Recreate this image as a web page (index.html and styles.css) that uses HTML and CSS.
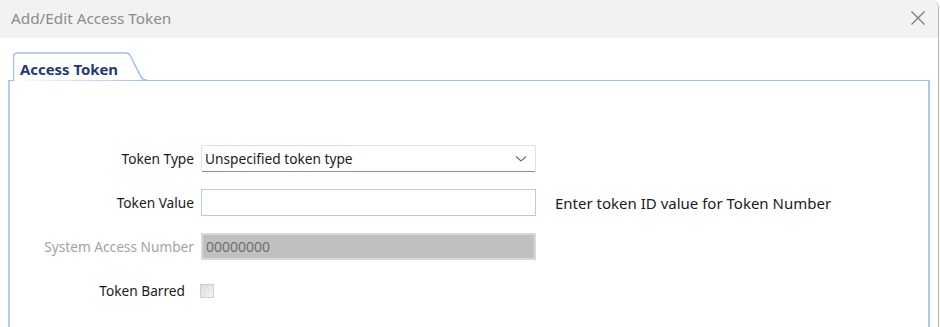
FILE: index.html
```html
<!DOCTYPE html>
<html lang="en">
<head>
<meta charset="UTF-8" />
<title>Add/Edit Access Token</title>
<link rel="stylesheet" href="styles.css">
</head>
<body>
<div class="dialog">
    <div class="title-bar">
        <span class="title">Add/Edit Access Token</span>
        <svg class="close" width="16" height="16" viewBox="0 0 16 16">
            <path d="M1.5 1.5 L14.5 14.5 M14.5 1.5 L1.5 14.5" stroke="#7a7a7a" stroke-width="1.3" fill="none"/>
        </svg>
    </div>

    <div class="content">
        <div class="tab-strip">
            <div class="tab">
                <svg class="tab-shape" width="134" height="29" viewBox="0 0 134 29">
                    <path d="M0.5 29 L0.5 5 Q0.5 1 4.5 1 L113 1 Q116 1 117.5 4 L128 25 Q130 28 133 28 L134 28" fill="#fff" stroke="#a3c0ea" stroke-width="1.5"/>
                </svg>
                <span class="tab-label">Access Token</span>
            </div>
        </div>

        <div class="panel">
            <div class="form">
                <label class="lbl">Token Type</label>
                <div class="select">
                    <span>Unspecified token type</span>
                    <svg width="12" height="8" viewBox="0 0 12 8"><path d="M1 1.5 L6 6 L11 1.5" stroke="#6d6d6d" stroke-width="1.2" fill="none"/></svg>
                </div>
                <span></span>

                <label class="lbl">Token Value</label>
                <input class="field" type="text" value="">
                <span class="hint">Enter token ID value for Token Number</span>

                <label class="lbl disabled">System Access Number</label>
                <input class="field locked" type="text" value="00000000" disabled>
                <span></span>

                <label class="lbl short">Token Barred</label>
                <div class="check-cell"><span class="check"></span></div>
                <span></span>
            </div>
        </div>
    </div>
</div>
</body>
</html>
```

FILE: styles.css
```css
* {
    box-sizing: border-box;
    margin: 0;
    padding: 0;
}
body {
    background: #fff;
    font-family: "Noto Sans", "Open Sans", sans-serif;
    color: #1b1b1b;
}
.dialog {
    width: 939px;
    height: 327px;
    border-right: 1px solid #b4b4b4;
    border-top-right-radius: 8px;
    overflow: hidden;
    background: #fff;
}
.title-bar {
    height: 38px;
    background: #f2f2f2;
    display: flex;
    align-items: center;
    justify-content: space-between;
    padding: 0 12px 3px 11px;
}
.title {
    font-size: 15.3px;
    color: #8b8b8b;
}
.content {
    padding: 14px 8px 0 8px;
}
.tab-strip {
    height: 29px;
    display: flex;
    padding-left: 5px;
    border-bottom: 1.5px solid #a3c0ea;
}
.tab {
    position: relative;
    width: 134px;
    height: 29px;
    margin-bottom: -1.5px;
}
.tab-shape {
    position: absolute;
    left: 0;
    top: 0;
}
.tab-label {
    position: relative;
    display: block;
    padding: 7px 0 0 7px;
    font-size: 14.9px;
    font-weight: 700;
    color: #1c3a78;
}
.panel {
    height: 260px;
    border-left: 2px solid #b3cdf0;
    border-right: 2px solid #a9c6ee;
    padding-top: 64px;
}
.form {
    display: grid;
    grid-template-columns: 184px 335px auto;
    grid-auto-rows: 27px;
    column-gap: 7px;
    row-gap: 17px;
    align-items: center;
}
.form .hint {
    margin-left: 12px;
    font-size: 15px;
    color: #1a1a1a;
}
.lbl {
    text-align: right;
    font-size: 13.7px;
    color: #1b1b1b;
}
.lbl.short {
    padding-right: 9px;
}
.lbl.disabled {
    color: #a3a3a3;
}
.select {
    height: 27px;
    display: flex;
    align-items: center;
    justify-content: space-between;
    padding: 0 8px 0 3px;
    border: 1px solid #e2e2e2;
    border-bottom: 1px solid #8e8e8e;
    border-radius: 2px;
    font-size: 13.7px;
    color: #1a1a2a;
    background: #fff;
}
.field {
    height: 27px;
    width: 335px;
    border: 1px solid #b7cbe8;
    font-family: inherit;
    font-size: 14px;
    padding: 0 3px;
    background: #fff;
    outline: none;
}
.field.locked {
    background: #c0c0c0;
    border: 2px solid #d8d8d8;
    color: #6e6e6e;
}
.check-cell {
    display: flex;
    align-items: center;
}
.check {
    width: 14px;
    height: 14px;
    margin-left: -1px;
    border: 1px solid #d0d0d0;
    background: linear-gradient(135deg, #dcdcdc, #f4f4f4);
}
```
